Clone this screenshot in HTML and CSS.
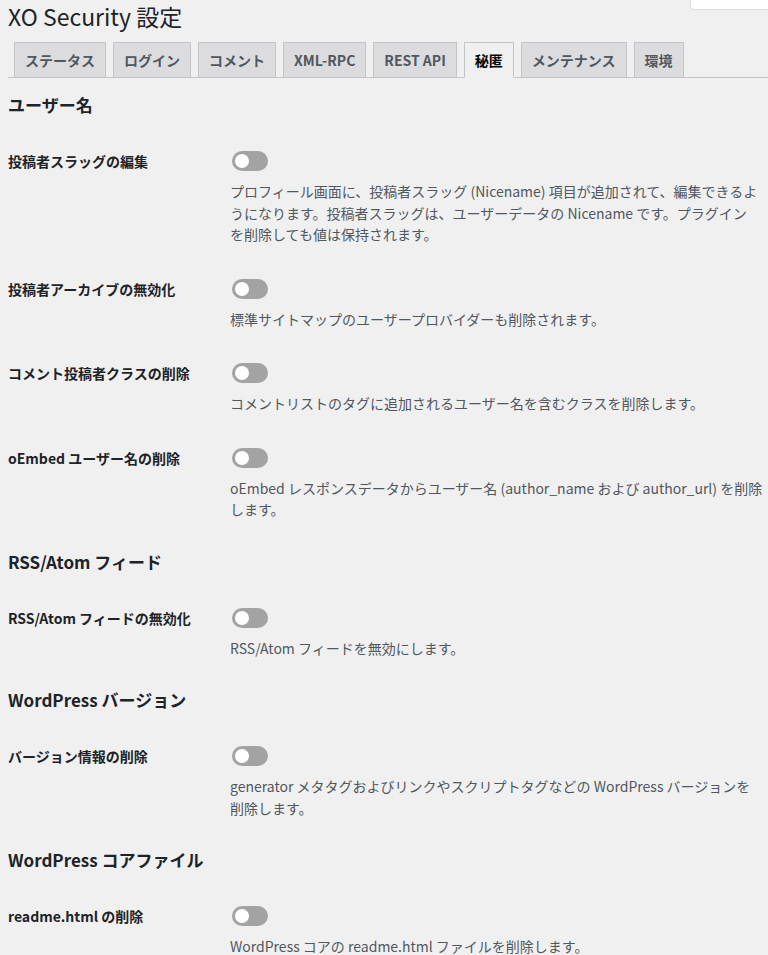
FILE: index.html
```html
<!DOCTYPE html>
<html lang="ja">
<head>
    <meta charset="UTF-8">
    <meta name="viewport" content="width=device-width, initial-scale=1.0">
    <title>XO Security 設定</title>
    <link rel="stylesheet" href="styles.css">
</head>
<body>
    <div class="search-box"></div>

    <div class="wrap">
        <h1>XO Security 設定</h1>

        <nav class="nav-tabs">
            <a class="nav-tab">ステータス</a>
            <a class="nav-tab">ログイン</a>
            <a class="nav-tab">コメント</a>
            <a class="nav-tab">XML-RPC</a>
            <a class="nav-tab">REST API</a>
            <a class="nav-tab active">秘匿</a>
            <a class="nav-tab">メンテナンス</a>
            <a class="nav-tab">環境</a>
        </nav>

        <h2>ユーザー名</h2>
        <div class="row">
            <div class="label">投稿者スラッグの編集</div>
            <div class="field">
                <span class="toggle"></span>
                <p class="desc">プロフィール画面に、投稿者スラッグ (Nicename) 項目が追加されて、編集できるようになります。投稿者スラッグは、ユーザーデータの Nicename です。プラグインを削除しても値は保持されます。</p>
            </div>
        </div>
        <div class="row">
            <div class="label">投稿者アーカイブの無効化</div>
            <div class="field">
                <span class="toggle"></span>
                <p class="desc">標準サイトマップのユーザープロバイダーも削除されます。</p>
            </div>
        </div>
        <div class="row">
            <div class="label">コメント投稿者クラスの削除</div>
            <div class="field">
                <span class="toggle"></span>
                <p class="desc">コメントリストのタグに追加されるユーザー名を含むクラスを削除します。</p>
            </div>
        </div>
        <div class="row">
            <div class="label">oEmbed ユーザー名の削除</div>
            <div class="field wide">
                <span class="toggle"></span>
                <p class="desc">oEmbed レスポンスデータからユーザー名 (author_name および author_url) を削除します。</p>
            </div>
        </div>

        <h2>RSS/Atom フィード</h2>
        <div class="row">
            <div class="label">RSS/Atom フィードの無効化</div>
            <div class="field">
                <span class="toggle"></span>
                <p class="desc">RSS/Atom フィードを無効にします。</p>
            </div>
        </div>

        <h2>WordPress バージョン</h2>
        <div class="row">
            <div class="label">バージョン情報の削除</div>
            <div class="field">
                <span class="toggle"></span>
                <p class="desc">generator メタタグおよびリンクやスクリプトタグなどの WordPress バージョンを削除します。</p>
            </div>
        </div>

        <h2>WordPress コアファイル</h2>
        <div class="row">
            <div class="label">readme.html の削除</div>
            <div class="field">
                <span class="toggle"></span>
                <p class="desc">WordPress コアの readme.html ファイルを削除します。</p>
            </div>
        </div>
    </div>
</body>
</html>
```

FILE: styles.css
```css
body {
    margin: 0;
    background: #f0f0f1;
    color: #1d2327;
    font-family: "Noto Sans CJK JP", "Noto Sans", sans-serif;
    font-size: 14px;
    overflow: hidden;
}

.search-box {
    position: absolute;
    top: -10px;
    right: -4px;
    width: 80px;
    height: 18px;
    background: #fff;
    border: 1px solid #dcdcde;
    border-radius: 4px;
}

.wrap {
    padding-left: 8px;
}

h1 {
    margin: 0;
    font-size: 23px;
    font-weight: 400;
    line-height: 32px;
}

.nav-tabs {
    display: flex;
    gap: 7px;
    margin-top: 10px;
    padding-left: 6px;
    border-bottom: 1px solid #c3c4c7;
}

.nav-tab {
    display: block;
    margin-bottom: -1px;
    padding: 0 10px;
    height: 34px;
    line-height: 34px;
    background: #dcdcde;
    border: 1px solid #c3c4c7;
    color: #50575e;
    font-size: 14px;
    font-weight: 700;
}

.nav-tab.active {
    background: #f0f0f1;
    border-bottom-color: #f0f0f1;
    color: #000;
}

h2 {
    margin: 12px 0 18px;
    font-size: 17px;
    font-weight: 700;
    line-height: 24px;
}

.nav-tabs + h2 {
    margin-top: 15px;
}

.row {
    display: flex;
    padding: 16px 0 17px;
}

.label {
    width: 222px;
    flex-shrink: 0;
    line-height: 20px;
    font-weight: 700;
    font-size: 14px;
}

.field {
    width: 528px;
}

.field.wide {
    width: 536px;
}

.toggle {
    display: block;
    position: relative;
    width: 36px;
    height: 20px;
    margin-left: 2px;
    border-radius: 10px;
    background: #a3a3a3;
}

.toggle::before {
    content: "";
    position: absolute;
    top: 3px;
    left: 3px;
    width: 14px;
    height: 14px;
    border-radius: 50%;
    background: #fff;
}

.desc {
    margin: 10px 0 0;
    line-height: 21.5px;
    color: #50575e;
}
```
